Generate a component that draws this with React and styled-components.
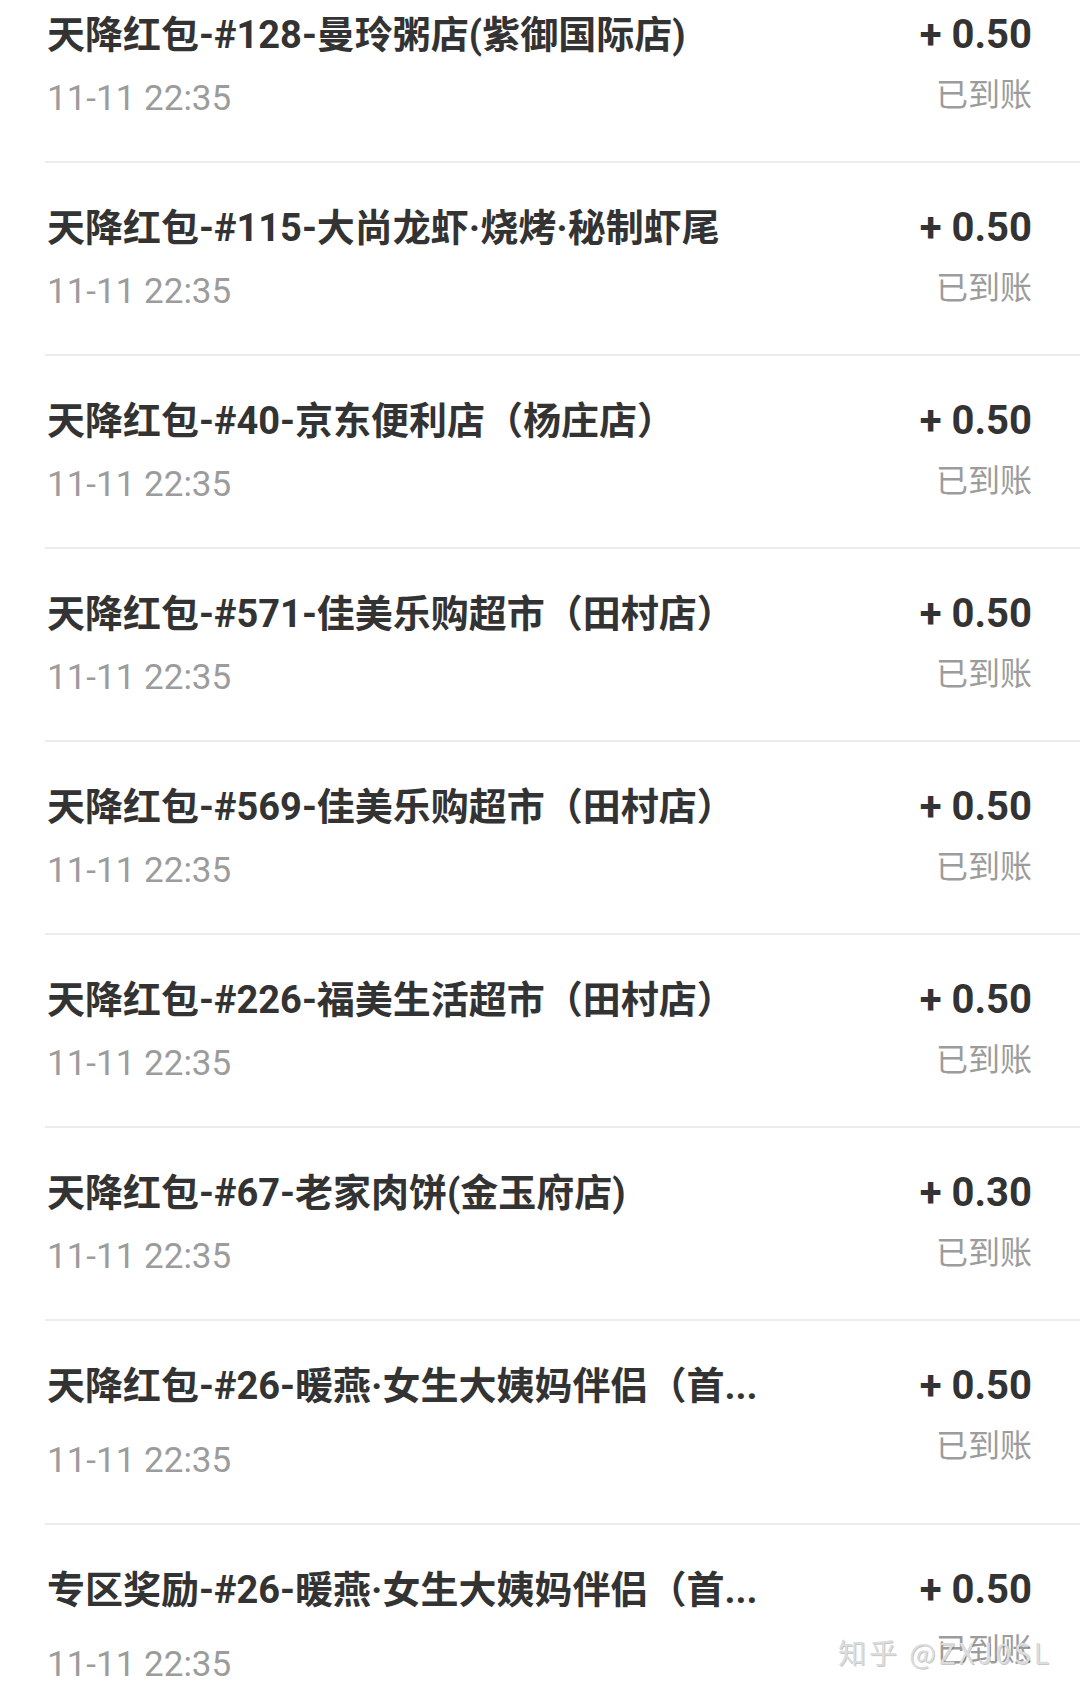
import React from "react";
import styled, { createGlobalStyle } from "styled-components";

const Global = createGlobalStyle`
  html, body { margin: 0; padding: 0; background: #fff; }
  body { font-family: Roboto, "Noto Sans CJK SC", sans-serif; overflow: hidden; }
`;

const Page = styled.div`
  position: relative;
  width: 1080px;
  height: 1694px;
  overflow: hidden;
  background: #fff;
`;

const List = styled.ul`
  list-style: none;
  margin: -30px 0 0 45px;
  padding: 0;
`;

const Row = styled.li`
  box-sizing: border-box;
  height: ${(p) => (p.$tall ? 204 : 193)}px;
  display: flex;
  justify-content: space-between;
  align-items: flex-start;
  padding: 40px 48px 0 2px;
  border-bottom: 2px solid #ececec;
`;

const Left = styled.div`
  display: flex;
  flex-direction: column;
  min-width: 0;
`;

const Right = styled.div`
  display: flex;
  flex-direction: column;
  align-items: flex-end;
`;

const Title = styled.div`
  font-family: Roboto, "Noto Sans CJK SC", sans-serif;
  font-size: 38px;
  font-weight: 700;
  color: #333;
  line-height: 50px;
  white-space: nowrap;
`;

const Time = styled.div`
  font-family: Roboto, "Noto Sans CJK SC", sans-serif;
  font-size: 35px;
  color: #9c9c9c;
  line-height: 40px;
  margin-top: ${(p) => (p.$tall ? 30 : 19)}px;
`;

const Amount = styled.div`
  font-family: Roboto, "Noto Sans CJK SC", sans-serif;
  font-size: 40px;
  font-weight: 700;
  color: #333;
  line-height: 50px;
  white-space: nowrap;
`;

const Status = styled.div`
  font-family: "Noto Sans CJK SC", sans-serif;
  font-size: 32px;
  color: #9c9c9c;
  line-height: 40px;
  margin-top: 12px;
`;

const Watermark = styled.div`
  position: absolute;
  right: 28px;
  top: 1635px;
  font-family: "Noto Sans CJK SC", sans-serif;
  font-size: 28px;
  line-height: 34px;
  color: #dcdcdc;
  text-shadow: 1px 1px 0 rgba(0, 0, 0, 0.22);
  letter-spacing: 3px;
  white-space: nowrap;
`;

const items = [
  { title: "天降红包-#128-曼玲粥店(紫御国际店)", amount: "+ 0.50" },
  { title: "天降红包-#115-大尚龙虾·烧烤·秘制虾尾", amount: "+ 0.50" },
  { title: "天降红包-#40-京东便利店（杨庄店）", amount: "+ 0.50" },
  { title: "天降红包-#571-佳美乐购超市（田村店）", amount: "+ 0.50" },
  { title: "天降红包-#569-佳美乐购超市（田村店）", amount: "+ 0.50" },
  { title: "天降红包-#226-福美生活超市（田村店）", amount: "+ 0.50" },
  { title: "天降红包-#67-老家肉饼(金玉府店)", amount: "+ 0.30" },
  { title: "天降红包-#26-暖燕·女生大姨妈伴侣（首...", amount: "+ 0.50", tall: true },
  { title: "专区奖励-#26-暖燕·女生大姨妈伴侣（首...", amount: "+ 0.50", tall: true },
];

export default function App() {
  return (
    <Page>
      <Global />
      <List>
        {items.map((it, i) => (
          <Row key={i} $tall={it.tall}>
            <Left>
              <Title>{it.title}</Title>
              <Time $tall={it.tall}>11-11 22:35</Time>
            </Left>
            <Right>
              <Amount>{it.amount}</Amount>
              <Status>已到账</Status>
            </Right>
          </Row>
        ))}
      </List>
      <Watermark>知乎 @ZXJ0SL</Watermark>
    </Page>
  );
}
